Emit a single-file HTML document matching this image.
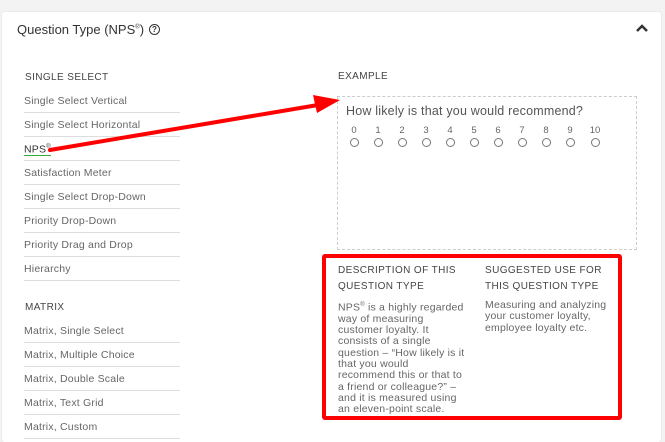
<!DOCTYPE html>
<html><head><style>
body{margin:0;width:665px;height:430px;background:#f3f3f3;font-family:"Liberation Sans",sans-serif;overflow:hidden;position:relative;color:#555}
.card{position:absolute;left:2px;top:12px;width:659px;height:430px;background:#fff;border-radius:3px;box-shadow:0 0 2px rgba(0,0,0,.08)}
.t{position:absolute;white-space:nowrap}
.h{font-size:10px;color:#444;letter-spacing:.4px}
.item{position:absolute;left:24px;width:156px;font-size:10.5px;color:#666;border-bottom:1px solid #ddd;height:24px;line-height:24px;box-sizing:border-box;letter-spacing:.2px}
.ex{position:absolute;left:337px;top:96px;width:300px;height:154px;border:1px dashed #ccc;box-sizing:border-box}
.nums span{position:absolute;font-size:9.5px;color:#666;width:14px;text-align:center}
.rad{position:absolute;width:9px;height:9px;border:1px solid #777;border-radius:50%;box-sizing:border-box}
.red{position:absolute;left:322px;top:254px;width:300px;height:166px;border:4px solid #f00;border-radius:3px;box-sizing:border-box}
.body{font-size:10.5px;line-height:11.3px;color:#666;letter-spacing:.2px}
</style></head><body>
<div class="card"></div>
<div class="t" style="left:17px;top:22px;font-size:13px;color:#333">Question Type (NPS<sup style="font-size:6px">®</sup>)</div>
<div style="position:absolute;left:149px;top:24px;width:9px;height:9px;border:1.5px solid #333;border-radius:50%;font-size:8px;line-height:9px;text-align:center;color:#333;font-weight:bold;background:#fff">?</div>
<svg style="position:absolute;left:635px;top:23px" width="14" height="10"><path d="M2 8 L7 3 L12 8" stroke="#333" stroke-width="2.5" fill="none"/></svg>
<div class="t h" style="left:25px;top:72px">SINGLE SELECT</div>
<div class="item" style="top:89px">Single Select Vertical</div>
<div class="item" style="top:113px">Single Select Horizontal</div>
<div class="item" style="top:137px;color:#333"><span style="border-bottom:1.5px solid #3a3;line-height:12px;display:inline-block">NPS<sup style="font-size:6px">®</sup></span></div>
<div class="item" style="top:161px">Satisfaction Meter</div>
<div class="item" style="top:185px">Single Select Drop-Down</div>
<div class="item" style="top:209px">Priority Drop-Down</div>
<div class="item" style="top:233px">Priority Drag and Drop</div>
<div class="item" style="top:257px">Hierarchy</div>
<div class="t h" style="left:25px;top:302px">MATRIX</div>
<div class="item" style="top:319px">Matrix, Single Select</div>
<div class="item" style="top:343px">Matrix, Multiple Choice</div>
<div class="item" style="top:367px">Matrix, Double Scale</div>
<div class="item" style="top:391px">Matrix, Text Grid</div>
<div class="item" style="top:415px">Matrix, Custom</div>
<div class="t h" style="left:338px;top:71px">EXAMPLE</div>
<div class="ex"></div>
<div class="t" style="left:346px;top:104px;font-size:12.5px;color:#555;letter-spacing:.2px">How likely is that you would recommend?</div>
<div class="nums">
<span style="left:347px;top:125px">0</span><span style="left:371px;top:125px">1</span><span style="left:395px;top:125px">2</span><span style="left:419px;top:125px">3</span><span style="left:443px;top:125px">4</span><span style="left:467px;top:125px">5</span><span style="left:491px;top:125px">6</span><span style="left:515px;top:125px">7</span><span style="left:539px;top:125px">8</span><span style="left:563px;top:125px">9</span><span style="left:588px;top:125px">10</span>
</div>
<div class="rad" style="left:350px;top:138px"></div><div class="rad" style="left:374px;top:138px"></div><div class="rad" style="left:398px;top:138px"></div><div class="rad" style="left:422px;top:138px"></div><div class="rad" style="left:446px;top:138px"></div><div class="rad" style="left:470px;top:138px"></div><div class="rad" style="left:494px;top:138px"></div><div class="rad" style="left:518px;top:138px"></div><div class="rad" style="left:542px;top:138px"></div><div class="rad" style="left:566px;top:138px"></div><div class="rad" style="left:591px;top:138px"></div>
<div class="red"></div>
<div class="t h" style="left:338px;top:263px;line-height:16px;font-size:10px">DESCRIPTION OF THIS<br>QUESTION TYPE</div>
<div class="t h" style="left:485px;top:263px;line-height:16px;font-size:10px">SUGGESTED USE FOR<br>THIS QUESTION TYPE</div>
<div class="t body" style="left:338px;top:300px">NPS<sup style="font-size:6px">®</sup> is a highly regarded<br>way of measuring<br>customer loyalty. It<br>consists of a single<br>question – “How likely is it<br>that you would<br>recommend this or that to<br>a friend or colleague?” –<br>and it is measured using<br>an eleven-point scale.</div>
<div class="t body" style="left:485px;top:300px">Measuring and analyzing<br>your customer loyalty,<br>employee loyalty etc.</div>
<svg style="position:absolute;left:0;top:0" width="665" height="430"><line x1="50" y1="150" x2="318" y2="105" stroke="#f00" stroke-width="4" stroke-linecap="round"/><polygon points="340,100 313,95 317,113" fill="#f00"/></svg>
</body></html>
